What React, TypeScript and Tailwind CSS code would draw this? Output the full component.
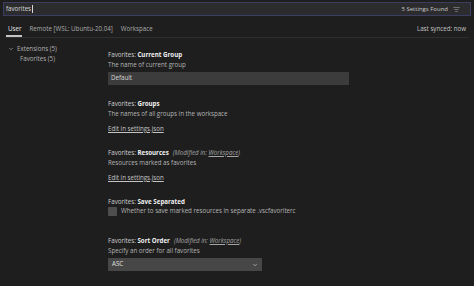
import { ChevronDown, ListFilter } from "lucide-react";

const font = { fontFamily: '"Open Sans", "Noto Sans", sans-serif' };

function Title({ name, modified }: { name: string; modified?: boolean }) {
  return (
    <div className="flex h-[10px] items-center text-[6.2px] leading-none text-[#d0d0d0]">
      <span>Favorites:&nbsp;</span>
      <span className="font-bold text-[#f0f0f0]">{name}</span>
      {modified && (
        <span className="ml-[4px] italic text-[#a4a4a4]">
          (Modified in: <span className="underline">Workspace</span>)
        </span>
      )}
    </div>
  );
}

function Desc({ children }: { children: React.ReactNode }) {
  return (
    <div className="flex h-[10px] items-center text-[6.2px] leading-none text-[#b4b4b4]">
      {children}
    </div>
  );
}

function EditLink() {
  return (
    <div className="mt-[5px] flex h-[10px] items-center text-[6.2px] leading-none text-[#c4c4c4] underline">
      Edit in settings.json
    </div>
  );
}

export default function App() {
  return (
    <div className="h-[286px] w-[474px] overflow-hidden bg-[#1e1e1e]" style={font}>
      <div className="px-[3px] pt-[2px]">
        <div className="flex h-[14px] items-center border border-[#3b3d63] bg-[#2c2c2e] pl-[2px] pr-[10px]">
          <span className="text-[6.2px] leading-none text-[#d8d8d8]">favorites</span>
          <span className="ml-[1px] h-[8px] w-px bg-[#d8d8d8]" />
          <span className="ml-auto text-[6px] leading-none text-[#c8c8c8]">5 Settings Found</span>
          <ListFilter className="ml-[5px] size-[7px] text-[#a0a0a0]" strokeWidth={2} />
        </div>
      </div>

      <div className="mt-[6px] flex h-[14px] items-center px-[8px] text-[6.2px] leading-none text-[#ababab]">
        <div className="relative text-[#e8e8e8]">
          User
          <span className="absolute -bottom-[5px] -left-[2px] -right-[1px] h-[2px] bg-[#c4c4c4]" />
        </div>
        <div className="ml-[8px]">Remote [WSL: Ubuntu-20.04]</div>
        <div className="ml-[8px]">Workspace</div>
        <div className="ml-auto text-[#c4c4c4]">Last synced: now</div>
      </div>
      <div className="mx-[5px] mt-[1px] h-px bg-[#2e2e2e]" />

      <div className="flex pt-[6px]">
        <div className="w-[104px] shrink-0 pl-[8px] text-[6.2px] leading-none text-[#b0b0b0]">
          <div className="flex h-[10px] items-center">
            <ChevronDown className="mr-[3px] size-[6px]" strokeWidth={2.5} />
            Extensions (5)
          </div>
          <div className="flex h-[11px] items-center pl-[12px]">Favorites (5)</div>
        </div>

        <div className="flex-1 pt-[6px]">
          <div className="pl-[4px]">
            <Title name="Current Group" />
            <Desc>The name of current group</Desc>
            <div className="mt-[2px] flex h-[13px] w-[241px] items-center bg-[#3c3c3c] px-[3px] text-[6.2px] leading-none text-[#d8d8d8]">
              Default
            </div>
          </div>

          <div className="mt-[14px] pl-[4px]">
            <Title name="Groups" />
            <Desc>The names of all groups in the workspace</Desc>
            <EditLink />
          </div>

          <div className="mt-[14px] pl-[4px]">
            <Title name="Resources" modified />
            <Desc>Resources marked as favorites</Desc>
            <EditLink />
          </div>

          <div className="mt-[14px] pl-[4px]">
            <Title name="Save Separated" />
            <div className="flex items-center gap-[4px]">
              <span className="size-[9px] rounded-[1px] bg-[#4e4e4e]" />
              <span className="text-[6.2px] leading-none text-[#b4b4b4]">
                Whether to save marked resources in separate .vscfavoriterc
              </span>
            </div>
          </div>

          <div className="mt-[20px] pl-[4px]">
            <Title name="Sort Order" modified />
            <Desc>Specify an order for all favorites</Desc>
            <div className="mt-[2px] flex h-[13px] w-[154px] items-center bg-[#474747] px-[4px] text-[6.2px] leading-none text-[#e0e0e0]">
              ASC
              <ChevronDown className="ml-auto size-[6px] text-[#c8c8c8]" strokeWidth={2.5} />
            </div>
          </div>
        </div>
      </div>
    </div>
  );
}
